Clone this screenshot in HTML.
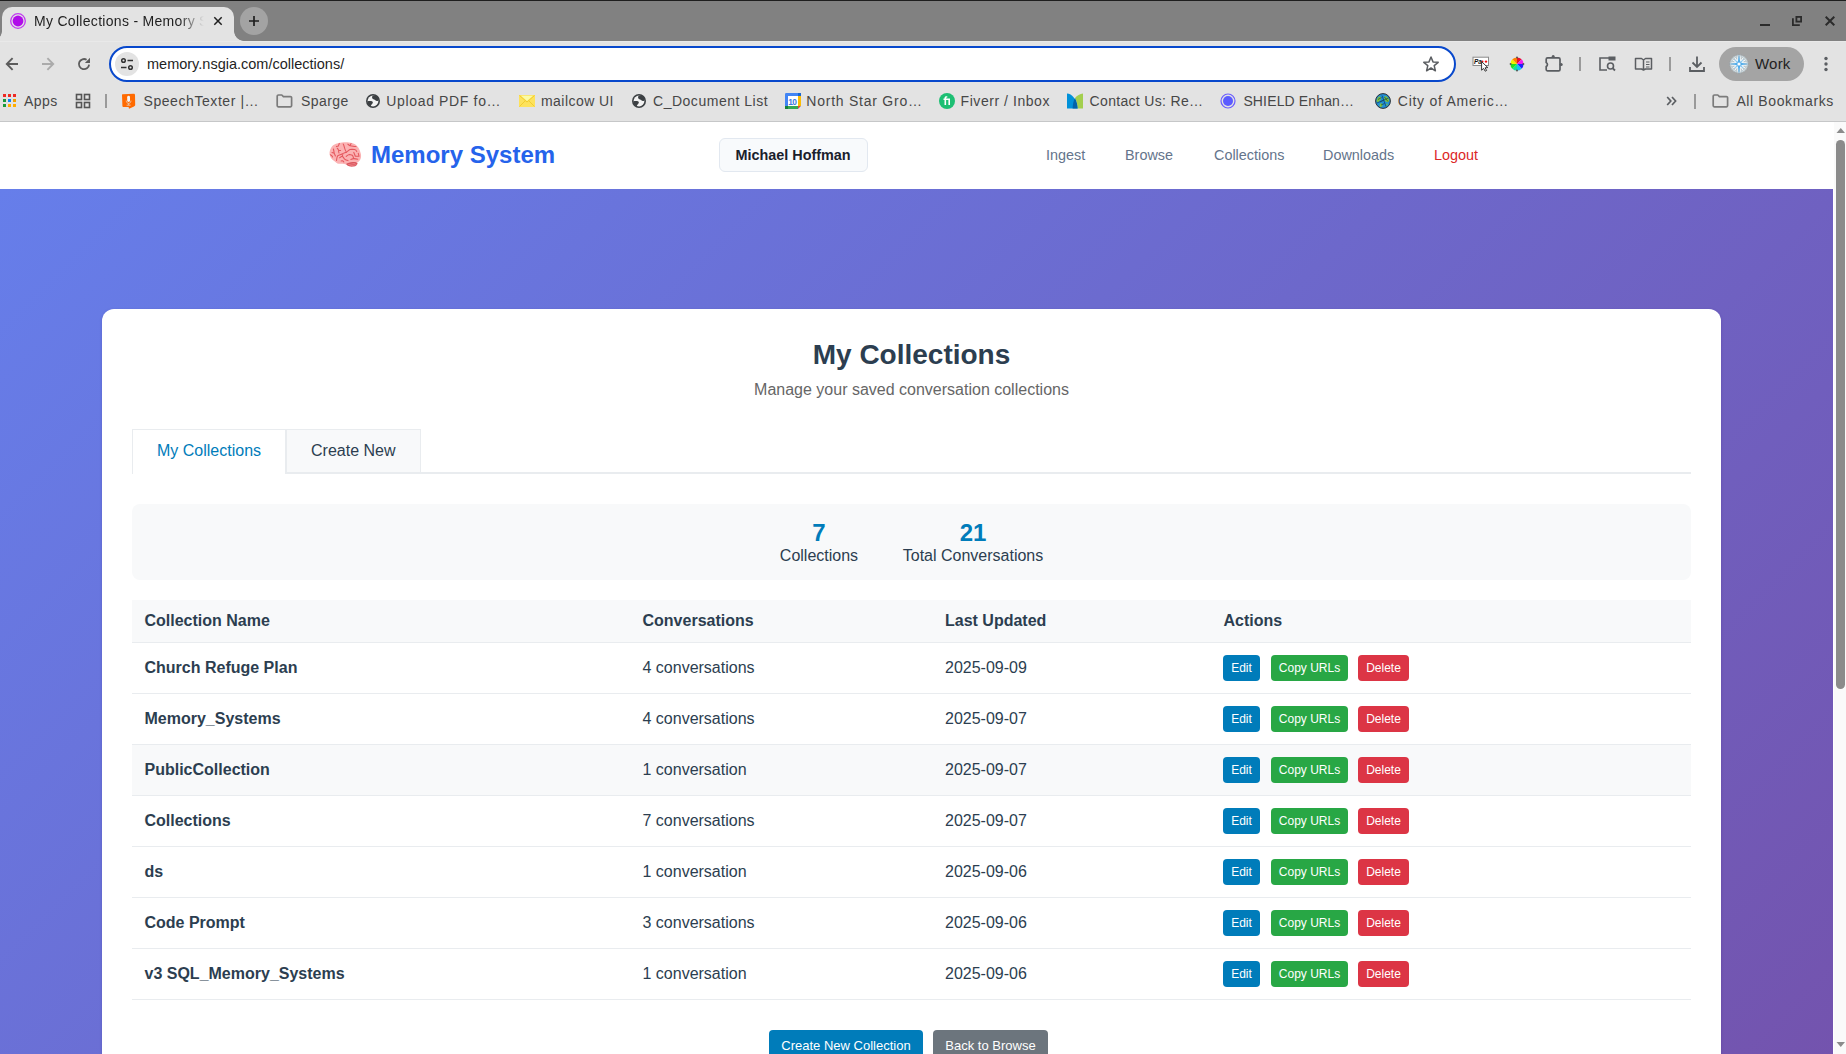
<!DOCTYPE html>
<html><head><meta charset="utf-8"><title>My Collections - Memory System</title>
<style>
*{box-sizing:border-box;margin:0;padding:0}
html,body{width:1846px;height:1054px;overflow:hidden;background:#fff;font-family:"Liberation Sans",sans-serif}
.abs{position:absolute}
.t{position:absolute;white-space:nowrap}
/* browser chrome */
#tabstrip{position:absolute;left:0;top:0;width:1846px;height:41px;background:#818181;border-top:1px solid #1e1e1e}
#tab{position:absolute;left:2px;top:7px;width:232px;height:34px;background:#e3e3e3;border-radius:10px 10px 0 0}
#tab .fl,#tab .fr{position:absolute;bottom:0;width:10px;height:10px}
#tab .fl{left:-10px;background:radial-gradient(circle at 0 0,transparent 9.5px,#e3e3e3 10.2px)}
#tab .fr{right:-10px;background:radial-gradient(circle at 100% 0,transparent 9.5px,#e3e3e3 10.2px)}
#toolbar{position:absolute;left:0;top:41px;width:1846px;height:43px;background:#e3e3e3;border-top:1px solid #e9e9e9}
#bookmarks{position:absolute;left:0;top:84px;width:1846px;height:37px;background:#e3e3e3}
#chromeline{position:absolute;left:0;top:121px;width:1846px;height:1px;background:#c6c7c8}
.bm{position:absolute;top:92px;height:18px;font-size:14px;line-height:18px;color:#474747;letter-spacing:.45px;white-space:nowrap}
#omni{position:absolute;left:109px;top:46px;width:1347px;height:36px;border:2px solid #0848cc;border-radius:18px;background:#fff}
/* page */
#page{position:absolute;left:0;top:122px;width:1833px;height:932px;overflow:hidden;background:linear-gradient(135deg,#667eea 0%,#764ba2 100%) 0 67px/1833px 1400px no-repeat}
#nav{position:absolute;left:0;top:0;width:1833px;height:67px;background:#fff}
#scroll{position:absolute;left:1833px;top:122px;width:13px;height:932px;background:#fafafa;border-left:1px solid #fff}
#card{position:absolute;left:102px;top:187px;width:1619px;height:900px;background:#fff;border-radius:12px;box-shadow:0 1px 3px rgba(50,30,120,.25)}
.th{top:489.3px;font-size:16px;line-height:20px;font-weight:bold;color:#2c3e50}
.td{font-size:16px;line-height:20px;color:#2c3e50}
.td.b{font-weight:bold;color:#2c3e50}
.sb{position:absolute;height:26px;border-radius:4px;color:#fff;font-size:12px;line-height:26px;text-align:center;white-space:nowrap}
.nl{top:23.6px;font-size:14.4px;line-height:18px}
</style></head><body>
<!-- ======== BROWSER CHROME ======== -->
<div id="tabstrip"></div>
<div id="tab"><i class="fl"></i><i class="fr"></i></div>
<!-- favicon -->
<svg class="abs" style="left:9px;top:12px" width="18" height="18" viewBox="0 0 18 18"><circle cx="9" cy="9" r="7.3" fill="none" stroke="#c13cf0" stroke-width="1.3"/><circle cx="9" cy="9" r="5.4" fill="#b00ce9"/></svg>
<div class="t" style="left:34px;top:12px;font-size:14px;line-height:18px;color:#1f1f1f;letter-spacing:.3px;width:172px;overflow:hidden;-webkit-mask-image:linear-gradient(90deg,#000 145px,transparent 170px)">My Collections - Memory System</div>
<svg class="abs" style="left:213px;top:16px" width="10" height="10" viewBox="0 0 10 10"><path d="M1.3 1.3L8.7 8.7M8.7 1.3L1.3 8.7" stroke="#1f1f1f" stroke-width="1.5"/></svg>
<div class="abs" style="left:240px;top:7px;width:28px;height:28px;border-radius:50%;background:#a3a3a3"></div>
<svg class="abs" style="left:249px;top:16px" width="10" height="10" viewBox="0 0 10 10"><path d="M5 0V10M0 5H10" stroke="#1f1f1f" stroke-width="1.7"/></svg>
<!-- window controls -->
<div class="abs" style="left:1760px;top:24px;width:10px;height:2px;background:#2b2b2b"></div>
<svg class="abs" style="left:1792px;top:16px" width="10" height="10" viewBox="0 0 10 10"><rect x="4.4" y="0.9" width="4.7" height="4.7" fill="none" stroke="#2b2b2b" stroke-width="1.8"/><path d="M0.9 2.2V9.1H7.8" fill="none" stroke="#2b2b2b" stroke-width="1.8"/></svg>
<svg class="abs" style="left:1825px;top:16px" width="10" height="10" viewBox="0 0 10 10"><path d="M0.7 0.7L9.3 9.3M9.3 0.7L0.7 9.3" stroke="#2b2b2b" stroke-width="2"/></svg>

<div id="toolbar"></div>
<!-- nav buttons -->
<svg class="abs" style="left:4px;top:55px" width="18" height="18" viewBox="0 0 18 18"><path d="M14 9H3M8.6 3.2L2.8 9L8.6 14.8" fill="none" stroke="#5c5c5c" stroke-width="1.9"/></svg>
<svg class="abs" style="left:39px;top:55px" width="18" height="18" viewBox="0 0 18 18"><path d="M3 9H14M8.4 3.2L14.2 9L8.4 14.8" fill="none" stroke="#ababab" stroke-width="1.9"/></svg>
<svg class="abs" style="left:75px;top:55px" width="18" height="18" viewBox="0 0 18 18"><path d="M14.1 9.6A5.1 5.1 0 1 1 11.6 4.7" fill="none" stroke="#5c5c5c" stroke-width="1.8"/><path d="M15 2.8V7.9H9.9Z" fill="#5c5c5c"/></svg>
<div id="omni"></div>
<div class="abs" style="left:115px;top:52px;width:24px;height:24px;border-radius:50%;background:#e3e3e3"></div>
<svg class="abs" style="left:119px;top:56px" width="16" height="16" viewBox="0 0 16 16"><circle cx="4.5" cy="4.5" r="1.8" fill="none" stroke="#333" stroke-width="1.5"/><path d="M8.5 4.5H14" stroke="#333" stroke-width="1.5"/><circle cx="11.5" cy="11.5" r="1.8" fill="none" stroke="#333" stroke-width="1.5"/><path d="M2 11.5H7.5" stroke="#333" stroke-width="1.5"/></svg>
<div class="t" style="left:147px;top:55px;font-size:14.5px;line-height:18px;color:#1f1f1f">memory.nsgia.com/collections/</div>
<svg class="abs" style="left:1422px;top:55px" width="18" height="18" viewBox="0 0 18 18"><path d="M9 2L11 6.9L16.2 7.3L12.2 10.6L13.4 15.8L9 13L4.6 15.8L5.8 10.6L1.8 7.3L7 6.9Z" fill="none" stroke="#5b5e62" stroke-width="1.5" stroke-linejoin="round"/></svg>
<!-- extension icons -->
<svg class="abs" style="left:1472px;top:56px" width="18" height="16" viewBox="0 0 18 16"><rect x="1" y="1.2" width="15.5" height="8.3" fill="#fff" stroke="#8a8a8a" stroke-width="1"/><text x="2" y="7.6" font-size="6.5" font-family="Liberation Sans" font-weight="bold" font-style="italic" fill="#111">Pa</text><circle cx="10.5" cy="5.6" r="1" fill="#f01010"/><circle cx="14" cy="5.6" r="1.2" fill="#f01010"/><path d="M9.6 5.6V14.2L11.6 12.4L13.2 15.2L14.6 14.5L13.1 11.8L15.8 11.6Z" fill="#fff" stroke="#222" stroke-width=".9" stroke-linejoin="round"/></svg>
<svg class="abs" style="left:1509px;top:56px" width="16" height="16" viewBox="0 0 16 16"><path d="M8 8L8.00 1.40A6.6 6.6 0 0 1 12.67 3.33Z" fill="#e8102a"/><path d="M8 8L12.67 3.33A6.6 6.6 0 0 1 14.60 8.00Z" fill="#f01cf0"/><path d="M8 8L14.60 8.00A6.6 6.6 0 0 1 12.67 12.67Z" fill="#2020ff"/><path d="M8 8L12.67 12.67A6.6 6.6 0 0 1 8.00 14.60Z" fill="#10c8f0"/><path d="M8 8L8.00 14.60A6.6 6.6 0 0 1 3.33 12.67Z" fill="#10e0a0"/><path d="M8 8L3.33 12.67A6.6 6.6 0 0 1 1.40 8.00Z" fill="#20e020"/><path d="M8 8L1.40 8.00A6.6 6.6 0 0 1 3.33 3.33Z" fill="#f0f000"/><path d="M8 8L3.33 3.33A6.6 6.6 0 0 1 8.00 1.40Z" fill="#ff8000"/><circle cx="8" cy="1.6" r="1" fill="#555"/><circle cx="8" cy="14.4" r="1" fill="#555"/><circle cx="1.6" cy="8" r="1" fill="#555"/><circle cx="14.4" cy="8" r="1" fill="#555"/></svg>
<svg class="abs" style="left:1544px;top:54px" width="20" height="19" viewBox="0 0 20 19"><path d="M3.6 3.8H14.6A1.4 1.4 0 0 1 16 5.2V15.4A1.4 1.4 0 0 1 14.6 16.8H3.6A1.4 1.4 0 0 1 2.2 15.4V12.6A2.4 2.4 0 0 0 2.2 8.4V5.2A1.4 1.4 0 0 1 3.6 3.8Z" fill="none" stroke="#5a5d61" stroke-width="1.7"/><circle cx="9.2" cy="2.6" r="1.5" fill="#5a5d61"/><circle cx="17.2" cy="10.4" r="1.5" fill="#5a5d61"/></svg>
<div class="abs" style="left:1579px;top:57px;width:2px;height:14px;background:#9a9a9a"></div>
<svg class="abs" style="left:1598px;top:55px" width="20" height="18" viewBox="0 0 20 18"><path d="M9 15H2V3H13" fill="none" stroke="#5b5e62" stroke-width="1.6"/><rect x="10.5" y="1.5" width="7" height="4" fill="#5b5e62"/><circle cx="12.5" cy="11" r="3" fill="none" stroke="#5b5e62" stroke-width="1.6"/><path d="M14.6 13.1L17 15.5" stroke="#5b5e62" stroke-width="1.8"/></svg>
<svg class="abs" style="left:1634px;top:55px" width="19" height="18" viewBox="0 0 19 18"><path d="M1.5 3.5H7.5L9.5 5V15L7.5 14H1.5Z M17.5 3.5H11.5L9.5 5V15L11.5 14H17.5Z" fill="none" stroke="#5b5e62" stroke-width="1.5" stroke-linejoin="round"/><path d="M12 7H15.5M12 9.5H15.5M12 12H15.5" stroke="#5b5e62" stroke-width="1.2"/></svg>
<div class="abs" style="left:1669px;top:57px;width:2px;height:14px;background:#9a9a9a"></div>
<svg class="abs" style="left:1688px;top:55px" width="18" height="18" viewBox="0 0 18 18"><path d="M9 1.5V11.5M4.5 7.5L9 12L13.5 7.5" fill="none" stroke="#5b5e62" stroke-width="1.8"/><path d="M2 12V16H16V12" fill="none" stroke="#5b5e62" stroke-width="1.8"/></svg>
<div class="abs" style="left:1719px;top:47px;width:85px;height:34px;border-radius:17px;background:#a4a4a4"></div>
<svg class="abs" style="left:1728px;top:53px" width="22" height="22" viewBox="0 0 22 22"><circle cx="11" cy="11" r="9" fill="#c9d6dc"/><path d="M14.34 9.95L20.81 12.95L13.69 13.24ZM14.49 11.31L19.31 16.56L12.62 14.10ZM14.10 12.62L16.56 19.31L11.31 14.49ZM13.24 13.69L12.95 20.81L9.95 14.34ZM12.05 14.34L9.05 20.81L8.76 13.69ZM10.69 14.49L5.44 19.31L7.90 12.62ZM9.38 14.10L2.69 16.56L7.51 11.31ZM8.31 13.24L1.19 12.95L7.66 9.95ZM7.66 12.05L1.19 9.05L8.31 8.76ZM7.51 10.69L2.69 5.44L9.38 7.90ZM7.90 9.38L5.44 2.69L10.69 7.51ZM8.76 8.31L9.05 1.19L12.05 7.66ZM9.95 7.66L12.95 1.19L13.24 8.31ZM11.31 7.51L16.56 2.69L14.10 9.38ZM12.62 7.90L19.31 5.44L14.49 10.69ZM13.69 8.76L20.81 9.05L14.34 12.05Z" fill="#f4f8fa" stroke="#8f9ca2" stroke-width=".35"/><circle cx="11" cy="11" r="5" fill="#eaf4fa"/><path d="M12.60 10.98L15.95 15.95L10.98 12.60ZM11.02 12.60L6.05 15.95L9.40 10.98ZM9.40 11.02L6.05 6.05L11.02 9.40ZM10.98 9.40L15.95 6.05L12.60 11.02Z" fill="#8cc8ee"/><path d="M11 1L12.3 9.7L21 11L12.3 12.3L11 21L9.7 12.3L1 11L9.7 9.7Z" fill="#52acea"/><circle cx="11" cy="11" r="1.6" fill="#fff"/></svg>
<div class="t" style="left:1755px;top:55px;font-size:15px;line-height:18px;color:#1f1f1f;letter-spacing:.2px">Work</div>
<svg class="abs" style="left:1822px;top:55px" width="8" height="18" viewBox="0 0 8 18"><circle cx="4" cy="3.5" r="1.7" fill="#5b5e62"/><circle cx="4" cy="9" r="1.7" fill="#5b5e62"/><circle cx="4" cy="14.5" r="1.7" fill="#5b5e62"/></svg>

<div id="bookmarks"></div>
<!-- bookmarks -->
<svg class="abs" style="left:3px;top:94px" width="14" height="14" viewBox="0 0 14 14"><rect x="0" y="0" width="3" height="3" fill="#ee2a24"/><rect x="5" y="0" width="3" height="3" fill="#ee2a24"/><rect x="10" y="0" width="3" height="3" fill="#ee2a24"/><rect x="0" y="5" width="3" height="3" fill="#1a9a3d"/><rect x="5" y="5" width="3" height="3" fill="#0b84f5"/><rect x="10" y="5" width="3" height="3" fill="#f0a000"/><rect x="0" y="10" width="3" height="3" fill="#1a9a3d"/><rect x="5" y="10" width="3" height="3" fill="#ffad00"/><rect x="10" y="10" width="3" height="3" fill="#ffad00"/></svg>
<div class="bm" style="left:24px;letter-spacing:0.45px">Apps</div>
<svg class="abs" style="left:75px;top:93px" width="16" height="16" viewBox="0 0 16 16"><g fill="none" stroke="#555" stroke-width="1.6"><rect x="1.5" y="1.5" width="5" height="5"/><rect x="9.5" y="1.5" width="5" height="5"/><rect x="1.5" y="9.5" width="5" height="5"/><rect x="9.5" y="9.5" width="5" height="5"/></g></svg>
<div class="abs" style="left:105px;top:94px;width:1.5px;height:14px;background:#9a9a9a"></div>
<svg class="abs" style="left:121px;top:93px" width="16" height="17" viewBox="0 0 16 17"><path d="M1.5 1.2L12.6 0.8C13.6 0.8 14 1.2 14 2.2L14.2 11.8C14.2 12.6 13.8 13 13 13.4L8 15.8L7.6 14H2.6C1.8 14 1.4 13.6 1.4 12.8L1 2C1 1.6 1.2 1.2 1.5 1.2Z" fill="#ff6a00"/><rect x="6.2" y="2.8" width="2.8" height="6.2" rx="1.4" fill="#f4f4f4"/><path d="M5.2 7.6C5.4 9.6 6.4 10.4 7.6 10.4C8.8 10.4 9.8 9.6 10 7.6M7.6 10.4V12M5.6 12.2H9.6" fill="none" stroke="#e8c8b0" stroke-width=".9"/></svg>
<div class="bm" style="left:143.5px;letter-spacing:0.57px">SpeechTexter |…</div>
<svg class="abs" style="left:276px;top:94px" width="17" height="14" viewBox="0 0 17 14"><path d="M2.4 1H5.8L7.4 2.6H14.4A1.2 1.2 0 0 1 15.6 3.8V11.6A1.2 1.2 0 0 1 14.4 12.8H2.4A1.2 1.2 0 0 1 1.2 11.6V2.2A1.2 1.2 0 0 1 2.4 1Z" fill="none" stroke="#7b7b7b" stroke-width="1.7" stroke-linejoin="round"/></svg>
<div class="bm" style="left:301px;letter-spacing:0.45px">Sparge</div>
<svg class="abs" style="left:366px;top:94px" width="14" height="14" viewBox="0 0 14 14"><circle cx="7" cy="7" r="7" fill="#3c4043"/><circle cx="7" cy="7" r="5.4" fill="#f2f2f2"/><path d="M6.6 1.4C6.2 2.6 5.8 3.6 6.4 4.6C7.2 5.6 8.6 5.4 9.6 6.6C10.4 7.4 11.6 7.2 12.6 6.2L12.4 3.6L9.5 1.6Z M1.4 7.2C3 7 5 6.8 6.4 7.6C7.4 8.4 6.6 9.8 5.6 10.6C5 11.2 4.8 12 4.6 12.6L2.2 10.6Z" fill="#3c4043"/></svg>
<div class="bm" style="left:386.3px;letter-spacing:0.65px">Upload PDF fo…</div>
<svg class="abs" style="left:519px;top:95px" width="16" height="12" viewBox="0 0 16 12"><rect x="0" y="0" width="16" height="12" fill="#fde25c"/><path d="M0.5 0.5L8 7L15.5 0.5" fill="none" stroke="#f1cb2e" stroke-width="1"/><path d="M2 0.7H14L8 6Z" fill="#fbfba6"/><path d="M0.5 11.5L6 6M15.5 11.5L10 6" stroke="#f1cb2e" stroke-width=".9"/></svg>
<div class="bm" style="left:541px;letter-spacing:0.45px">mailcow UI</div>
<svg class="abs" style="left:632px;top:94px" width="14" height="14" viewBox="0 0 14 14"><circle cx="7" cy="7" r="7" fill="#3c4043"/><circle cx="7" cy="7" r="5.4" fill="#f2f2f2"/><path d="M6.6 1.4C6.2 2.6 5.8 3.6 6.4 4.6C7.2 5.6 8.6 5.4 9.6 6.6C10.4 7.4 11.6 7.2 12.6 6.2L12.4 3.6L9.5 1.6Z M1.4 7.2C3 7 5 6.8 6.4 7.6C7.4 8.4 6.6 9.8 5.6 10.6C5 11.2 4.8 12 4.6 12.6L2.2 10.6Z" fill="#3c4043"/></svg>
<div class="bm" style="left:653px;letter-spacing:0.52px">C_Document List</div>
<svg class="abs" style="left:785px;top:93px" width="16" height="16" viewBox="0 0 16 16"><rect x="0" y="0" width="16" height="16" rx="1.2" fill="#4285f4"/><rect x="3" y="3" width="10" height="10" fill="#fff"/><rect x="13" y="3" width="3" height="10" fill="#fbbc04"/><rect x="0" y="13" width="13" height="3" fill="#34a853"/><rect x="0" y="13" width="3" height="3" fill="#188038"/><rect x="13" y="0" width="3" height="3" fill="#1967d2"/><path d="M13 13H16L13 16Z" fill="#ea4335"/><path d="M16 13V16H13Z" fill="#e3e3e3"/><text x="3.3" y="11.6" font-size="8.4" font-family="Liberation Sans" font-weight="bold" fill="#3a78e0" letter-spacing="-.7">10</text></svg>
<div class="bm" style="left:806.3px;letter-spacing:0.76px">North Star Gro…</div>
<svg class="abs" style="left:939px;top:93px" width="16" height="16" viewBox="0 0 16 16"><circle cx="8" cy="8" r="8" fill="#1dbf73"/><path d="M5.5 12V7H4.5V5.5H5.5V5C5.5 3.8 6.3 3.2 7.5 3.2H8.3V4.6H7.8C7.3 4.6 7.1 4.8 7.1 5.3V5.5H11V12H9.4V7H7.1V12Z" fill="#fff"/></svg>
<div class="bm" style="left:960.6px;letter-spacing:0.55px">Fiverr / Inbox</div>
<svg class="abs" style="left:1066px;top:93px" width="18" height="16" viewBox="0 0 18 16"><path d="M1 0.4C6 0.8 10 5 11.7 15.6L1 15.6Z" fill="#0091d9"/><path d="M17 0.4V15.6H11.7C11.4 11 10.6 8 9 5C11 2.4 14 0.7 17 0.4Z" fill="#a3cf4e"/><path d="M9 5C10.5 8 11.4 11 11.7 15.6H6.6C6.8 11 7.6 7.6 9 5Z" fill="#0063aa"/></svg>
<div class="bm" style="left:1089.6px;letter-spacing:0.32px">Contact Us: Re…</div>
<svg class="abs" style="left:1220px;top:93px" width="16" height="16" viewBox="0 0 16 16"><circle cx="8" cy="8" r="7" fill="none" stroke="#6a5cff" stroke-width="1.2"/><circle cx="8" cy="8" r="5" fill="#5b5bff"/></svg>
<div class="bm" style="left:1243.4px;letter-spacing:0.14px">SHIELD Enhan…</div>
<svg class="abs" style="left:1375px;top:93px" width="16" height="16" viewBox="0 0 16 16"><circle cx="8" cy="8" r="7.6" fill="#1f8fd8"/><path d="M2.4 5.2C3.6 3.4 5 3.2 6 4.2C7 5.6 5.2 7 4.2 8.2C3.2 9.4 2 9 1.4 8Z M9.6 3C11.4 3.2 13.2 4.4 14 6.4C14.4 8.4 13 9.8 11.6 9C10.2 8.2 9.4 6.8 9.2 5.4Z M5.4 10.4C6.6 9.8 7.8 10.6 7.6 12C7.4 13.2 6.2 14.6 5 13.8C4.2 13 4.4 11 5.4 10.4Z M11.6 10.6C12.4 10.4 13 11 12.6 12C12.2 12.8 11.4 12.8 11.2 12Z" fill="#7cc142"/><path d="M3 6.5L6.5 4.5M5 9L9 7M6 12L9.5 10.5M9.5 4L13 8.5M7 2.5L11 13.5M2 10L13.5 5" stroke="#0d2a3c" stroke-width=".8" opacity=".7"/><circle cx="8" cy="8" r="7.4" fill="none" stroke="#333" stroke-width="1"/></svg>
<div class="bm" style="left:1397.8px;letter-spacing:0.73px">City of Americ…</div>
<svg class="abs" style="left:1666px;top:96px" width="12" height="10" viewBox="0 0 12 10"><path d="M1.2 1L4.8 5L1.2 9M6 1L9.6 5L6 9" fill="none" stroke="#5b5e62" stroke-width="1.7"/></svg>
<div class="abs" style="left:1694px;top:94px;width:1.5px;height:15px;background:#9a9a9a"></div>
<svg class="abs" style="left:1711.5px;top:94px" width="17" height="14" viewBox="0 0 17 14"><path d="M2.4 1H5.8L7.4 2.6H14.4A1.2 1.2 0 0 1 15.6 3.8V11.6A1.2 1.2 0 0 1 14.4 12.8H2.4A1.2 1.2 0 0 1 1.2 11.6V2.2A1.2 1.2 0 0 1 2.4 1Z" fill="none" stroke="#7b7b7b" stroke-width="1.7" stroke-linejoin="round"/></svg>
<div class="bm" style="left:1736.4px;letter-spacing:0.62px">All Bookmarks</div>
<div id="chromeline"></div>
<!-- ======== PAGE ======== -->
<div id="page">
  <div id="nav"></div>
  <!-- brain -->
  <svg class="abs" style="left:325px;top:16px" width="40" height="32" viewBox="0 0 40 32">
    <path d="M6 10C7 8 9 6.5 11 5.8C13 4.9 15 4.6 17 4.4C19.5 4.2 22 4.2 24 4.4C26 4.7 28 5.2 29.5 6C31.2 6.9 32.5 8.2 33.5 9.8C34.6 11.6 35.4 13.8 35.9 16C36.3 18 36.1 20 35.3 21.6C34.6 23 33.4 23.9 32.4 24.6L21 26.4C19.5 25.6 17.5 25.5 15.5 25.8C13.5 26 11.8 25.3 10.4 23.9C9 22.6 7.2 21.8 6 20C4.8 18.2 4.4 16 4.6 14C4.8 12.6 5.2 11.2 6 10Z" fill="#fbb2b3"/>
    <path d="M21 26C22.5 25 25 24.2 28 24C30 23.8 31.8 24.2 32.6 25.2C32.2 26.8 30.8 28.2 28.8 28.6C26.5 29 24 28.6 22.4 27.6Z" fill="#d9565d"/>
    <path d="M23 26.8L30.5 25.2M24.5 28L31.5 26.6" stroke="#f08a8f" stroke-width=".7"/>
    <g fill="none" stroke="#e4575d" stroke-width="1.05" stroke-linecap="round" stroke-linejoin="round">
      <path d="M11.5 22.5C11.8 20.5 11.8 18.6 12.8 17.6C14.2 16.6 15.6 16.8 17 16C18.6 15.2 20 14.8 21.4 14.2C22.8 13.4 23.6 12.2 25 11.6C26.6 11.2 28.4 11.4 29.6 11.6C30.6 11.8 31.4 12.6 31.8 13.6"/>
      <path d="M18.2 6C19 7.2 19.2 8.6 19.6 10C19.9 11.4 20.2 12.6 21.4 14.2"/>
      <path d="M12.2 10.2C13 11 13.4 11.8 13.8 12.4L15.6 12.4M13.6 12.4C13.4 13.4 13.8 14.4 14 15"/>
      <path d="M8.4 11C8.8 12.6 9 13.8 9.2 15.2L7 14.6M9.2 15.2C9.6 16.4 10.2 17.2 10.4 18"/>
      <path d="M14.3 5.4C14 6.6 13.6 7.4 13.4 8L11.4 8.6"/>
      <path d="M22.8 6.2C23.6 7 24.2 7.4 25 7.8L28 8.2C29 8.4 30 8.4 31 8.6M25 7.8L26 5.6"/>
      <path d="M14.6 19.8C15.6 19 16.4 18.4 17.2 18.2C18 18.6 18.8 19.8 19.6 21.2C20.6 22 22 22.4 23 22.6M17.2 18.2L17.8 16.6"/>
      <path d="M21.2 18.4C22.2 17.4 23.2 16.6 24.3 16.4C25.4 16.4 26.4 16.8 27.3 17.2C28 18 28.2 19 28.6 20.2"/>
      <path d="M28.8 14.4C29.4 15.6 29.8 17 30.3 18.2C31.2 18.4 32.4 18.4 34 18.2M33.2 15.2C33.6 16.4 33.8 17.4 34 18.2"/>
      <path d="M25.8 21.4C26.8 21 27.8 20.6 28.8 20.6C30.2 20.6 31.4 20.8 32.8 21.2"/>
      <path d="M5.4 16.8C6.4 17.2 7.2 18 7.6 19M16.2 23C17.2 22.6 18.2 23 18.8 24"/>
    </g>
  </svg>
  <div class="t" style="left:371px;top:18.6px;font-size:24px;line-height:28px;font-weight:bold;color:#2563eb">Memory System</div>
  <div class="abs" style="left:719px;top:16px;width:149px;height:34px;border:1px solid #e2e8f0;background:#f8fafc;border-radius:6px"></div>
  <div class="t" style="left:735.5px;top:23.6px;font-size:14.4px;line-height:18px;font-weight:bold;color:#1a202c">Michael Hoffman</div>
  <div class="t nl" style="left:1046px;color:#64748b">Ingest</div>
  <div class="t nl" style="left:1125px;color:#64748b">Browse</div>
  <div class="t nl" style="left:1214px;color:#64748b">Collections</div>
  <div class="t nl" style="left:1323px;color:#64748b">Downloads</div>
  <div class="t nl" style="left:1434px;color:#dc2626">Logout</div>

  <div id="card"></div>
  <div class="t" style="left:102px;width:1619px;text-align:center;top:217.3px;font-size:28px;line-height:32px;font-weight:bold;color:#2c3e50">My Collections</div>
  <div class="t" style="left:102px;width:1619px;text-align:center;top:258px;font-size:16px;line-height:20px;color:#666">Manage your saved conversation collections</div>

  <!-- tabs -->
  <div class="abs" style="left:132px;top:350px;width:1559px;height:2px;background:#e9ecef"></div>
  <div class="abs" style="left:132px;top:307px;width:154px;height:45px;background:#fff;border:1px solid #e9ecef;border-bottom:none"></div>
  <div class="abs" style="left:286px;top:307px;width:135px;height:43px;background:#f8f9fa;border:1px solid #e9ecef;border-bottom:none"></div>
  <div class="t" style="left:157px;top:319.3px;font-size:16px;line-height:20px;color:#007cba">My Collections</div>
  <div class="t" style="left:311px;top:319.3px;font-size:16px;line-height:20px;color:#2c3e50">Create New</div>

  <!-- stats -->
  <div class="abs" style="left:132px;top:382px;width:1559px;height:76px;background:#f8f9fa;border-radius:8px"></div>
  <div class="t" style="left:719px;width:200px;text-align:center;top:396.7px;font-size:24px;line-height:28px;font-weight:bold;color:#007cba">7</div>
  <div class="t" style="left:719px;width:200px;text-align:center;top:424.3px;font-size:16px;line-height:20px;color:#2c3e50">Collections</div>
  <div class="t" style="left:873px;width:200px;text-align:center;top:396.7px;font-size:24px;line-height:28px;font-weight:bold;color:#007cba">21</div>
  <div class="t" style="left:873px;width:200px;text-align:center;top:424.3px;font-size:16px;line-height:20px;color:#2c3e50">Total Conversations</div>

  <!-- table -->
  <div class="abs" style="left:132px;top:478px;width:1559px;height:42px;background:#f8f9fa;border-bottom:1px solid #e9ecef;box-sizing:content-box"></div>
  <div class="t th" style="left:144.5px">Collection Name</div>
  <div class="t th" style="left:642.5px">Conversations</div>
  <div class="t th" style="left:945px">Last Updated</div>
  <div class="t th" style="left:1223.5px">Actions</div>
  <div class="abs" style="left:132px;top:521px;width:1559px;height:51px;background:#fff;border-bottom:1px solid #e9ecef"></div>
  <div class="t td b" style="left:144.5px;top:536.36px">Church Refuge Plan</div>
  <div class="t td" style="left:642.5px;top:536.36px">4 conversations</div>
  <div class="t td" style="left:945px;top:536.36px">2025-09-09</div>
  <div class="sb" style="left:1223px;top:533px;width:37px;background:#007cba">Edit</div>
  <div class="sb" style="left:1271px;top:533px;width:77px;background:#28a745">Copy URLs</div>
  <div class="sb" style="left:1358px;top:533px;width:51px;background:#dc3545">Delete</div>
  <div class="abs" style="left:132px;top:572px;width:1559px;height:51px;background:#fff;border-bottom:1px solid #e9ecef"></div>
  <div class="t td b" style="left:144.5px;top:587.36px">Memory_Systems</div>
  <div class="t td" style="left:642.5px;top:587.36px">4 conversations</div>
  <div class="t td" style="left:945px;top:587.36px">2025-09-07</div>
  <div class="sb" style="left:1223px;top:584px;width:37px;background:#007cba">Edit</div>
  <div class="sb" style="left:1271px;top:584px;width:77px;background:#28a745">Copy URLs</div>
  <div class="sb" style="left:1358px;top:584px;width:51px;background:#dc3545">Delete</div>
  <div class="abs" style="left:132px;top:623px;width:1559px;height:51px;background:#f8f9fa;border-bottom:1px solid #e9ecef"></div>
  <div class="t td b" style="left:144.5px;top:638.36px">PublicCollection</div>
  <div class="t td" style="left:642.5px;top:638.36px">1 conversation</div>
  <div class="t td" style="left:945px;top:638.36px">2025-09-07</div>
  <div class="sb" style="left:1223px;top:635px;width:37px;background:#007cba">Edit</div>
  <div class="sb" style="left:1271px;top:635px;width:77px;background:#28a745">Copy URLs</div>
  <div class="sb" style="left:1358px;top:635px;width:51px;background:#dc3545">Delete</div>
  <div class="abs" style="left:132px;top:674px;width:1559px;height:51px;background:#fff;border-bottom:1px solid #e9ecef"></div>
  <div class="t td b" style="left:144.5px;top:689.36px">Collections</div>
  <div class="t td" style="left:642.5px;top:689.36px">7 conversations</div>
  <div class="t td" style="left:945px;top:689.36px">2025-09-07</div>
  <div class="sb" style="left:1223px;top:686px;width:37px;background:#007cba">Edit</div>
  <div class="sb" style="left:1271px;top:686px;width:77px;background:#28a745">Copy URLs</div>
  <div class="sb" style="left:1358px;top:686px;width:51px;background:#dc3545">Delete</div>
  <div class="abs" style="left:132px;top:725px;width:1559px;height:51px;background:#fff;border-bottom:1px solid #e9ecef"></div>
  <div class="t td b" style="left:144.5px;top:740.36px">ds</div>
  <div class="t td" style="left:642.5px;top:740.36px">1 conversation</div>
  <div class="t td" style="left:945px;top:740.36px">2025-09-06</div>
  <div class="sb" style="left:1223px;top:737px;width:37px;background:#007cba">Edit</div>
  <div class="sb" style="left:1271px;top:737px;width:77px;background:#28a745">Copy URLs</div>
  <div class="sb" style="left:1358px;top:737px;width:51px;background:#dc3545">Delete</div>
  <div class="abs" style="left:132px;top:776px;width:1559px;height:51px;background:#fff;border-bottom:1px solid #e9ecef"></div>
  <div class="t td b" style="left:144.5px;top:791.36px">Code Prompt</div>
  <div class="t td" style="left:642.5px;top:791.36px">3 conversations</div>
  <div class="t td" style="left:945px;top:791.36px">2025-09-06</div>
  <div class="sb" style="left:1223px;top:788px;width:37px;background:#007cba">Edit</div>
  <div class="sb" style="left:1271px;top:788px;width:77px;background:#28a745">Copy URLs</div>
  <div class="sb" style="left:1358px;top:788px;width:51px;background:#dc3545">Delete</div>
  <div class="abs" style="left:132px;top:827px;width:1559px;height:51px;background:#fff;border-bottom:1px solid #e9ecef"></div>
  <div class="t td b" style="left:144.5px;top:842.36px">v3 SQL_Memory_Systems</div>
  <div class="t td" style="left:642.5px;top:842.36px">1 conversation</div>
  <div class="t td" style="left:945px;top:842.36px">2025-09-06</div>
  <div class="sb" style="left:1223px;top:839px;width:37px;background:#007cba">Edit</div>
  <div class="sb" style="left:1271px;top:839px;width:77px;background:#28a745">Copy URLs</div>
  <div class="sb" style="left:1358px;top:839px;width:51px;background:#dc3545">Delete</div>
  <div class="abs btn" style="left:769px;top:908px;width:154px;height:40px;background:#007cba;border-radius:4px"></div>
  <div class="t" style="left:769px;width:154px;text-align:center;top:915.5px;font-size:13px;line-height:16px;color:#fff">Create New Collection</div>
  <div class="abs btn" style="left:933px;top:908px;width:115px;height:40px;background:#6c757d;border-radius:4px"></div>
  <div class="t" style="left:933px;width:115px;text-align:center;top:915.5px;font-size:13px;line-height:16px;color:#fff">Back to Browse</div>
</div>
<!-- scrollbar -->
<div id="scroll"></div>
<svg class="abs" style="left:1836px;top:127px" width="10" height="7" viewBox="0 0 10 7"><path d="M0.5 6L4.75 1L9 6Z" fill="#8b8b8b"/></svg>
<div class="abs" style="left:1836px;top:140px;width:9px;height:549px;border-radius:4.5px;background:#8b8b8b"></div>
<svg class="abs" style="left:1836px;top:1041px" width="10" height="7" viewBox="0 0 10 7"><path d="M0.5 1L4.75 6L9 1Z" fill="#8b8b8b"/></svg>

</body></html>
